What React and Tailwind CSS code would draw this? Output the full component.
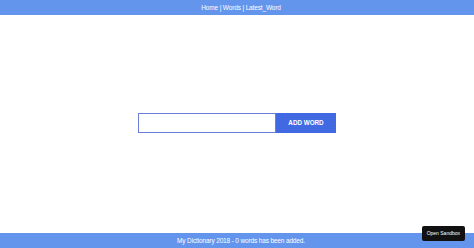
export default function App() {
  return (
    <div className="flex h-[248px] w-[474px] flex-col bg-white font-['Liberation_Sans',Arial,sans-serif]">
      <header className="flex h-[15px] items-center justify-center bg-[#6495ed] pl-[8px] text-[6.5px] tracking-[-0.15px] text-white">
        Home | Words | Latest_Word
      </header>
      <main className="flex flex-1 items-center justify-center pb-[2px]">
        <div className="flex h-[20px]">
          <input className="h-full w-[138px] border border-[#6b7fd6] bg-white outline-none" />
          <button className="h-full w-[60px] bg-[#4169e1] text-[6.3px] font-bold text-white">ADD WORD</button>
        </div>
      </main>
      <footer className="relative flex h-[15px] items-center justify-center bg-[#6495ed] pl-[8px] text-[6.5px] tracking-[-0.15px] text-white">
        My Dictionary 2018 - 0 words has been added.
        <span className="absolute right-[9px] bottom-[7px] rounded-[2px] bg-[#111] px-[5px] py-[5px] text-[5px] leading-none tracking-normal text-white">
          Open Sandbox
        </span>
      </footer>
    </div>
  );
}
